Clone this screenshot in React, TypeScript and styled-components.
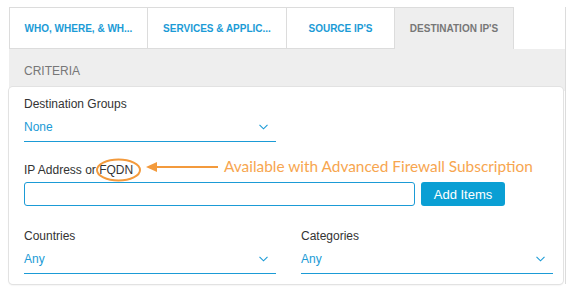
import React from "react";
import styled, { createGlobalStyle } from "styled-components";

const Global = createGlobalStyle`
  html, body { margin: 0; padding: 0; background: #fff; }
  body { font-family: "Liberation Sans", Arial, sans-serif; }
  * { box-sizing: border-box; }
`;

const Page = styled.div`
  padding: 7px 0 0 9px;
  width: 572px;
  height: 293px;
`;

const Panel = styled.div`
  width: 557px;
  border-right: 1px solid #dcdcdc;
`;

const TabBar = styled.div`
  display: flex;
  height: 42px;
`;

const Tab = styled.div<{ $active?: boolean; $w: number; $first?: boolean }>`
  width: ${(p) => p.$w}px;
  height: 42px;
  display: flex;
  align-items: center;
  justify-content: center;
  font-size: 10px;
  font-weight: bold;
  white-space: nowrap;
  color: ${(p) => (p.$active ? "#777" : "#1b9bd6")};
  background: ${(p) => (p.$active ? "#eeeeee" : "#fff")};
  border-top: 1px solid #dcdcdc;
  border-right: 1px solid #dcdcdc;
  border-left: ${(p) => (p.$first ? "1px solid #dcdcdc" : "none")};
  border-bottom: ${(p) => (p.$active ? "none" : "1px solid #dcdcdc")};
`;

const Criteria = styled.div`
  background: #eeeeee;
  height: 38px;
  padding: 15px 0 0 15px;
  font-size: 12px;
  line-height: 14px;
  color: #777;
`;

const CardWrap = styled.div`
  background: linear-gradient(#eeeeee 0 4px, transparent 4px);
  padding-right: 2px;
`;

const Card = styled.div`
  background: #fff;
  border-radius: 4px;
  box-shadow: 0 0 0 1px #e2e2e2, 0 1px 2px rgba(0, 0, 0, 0.12);
  padding: 10px 10px 10px 15px;
  display: flex;
  flex-direction: column;
`;

const Label = styled.div<{ $mt?: number }>`
  position: relative;
  font-size: 12px;
  line-height: 14px;
  color: #333;
  margin-top: ${(p) => p.$mt ?? 0}px;
  white-space: nowrap;
`;

const Select = styled.div<{ $w?: number }>`
  width: ${(p) => p.$w ?? 252}px;
  display: flex;
  align-items: center;
  justify-content: space-between;
  padding: 9px 8px 7px 0;
  border-bottom: 1px solid #1b9bd6;
  font-size: 12px;
  line-height: 14px;
  color: #1b9bd6;
`;

const Chevron = () => (
  <svg width="9" height="6" viewBox="0 0 9 6">
    <polyline points="0.5,0.8 4.5,4.8 8.5,0.8" fill="none" stroke="#1b9bd6" strokeWidth="1.1" />
  </svg>
);

const InputRow = styled.div`
  display: flex;
  gap: 6px;
  margin-top: 5px;
`;

const TextInput = styled.div`
  width: 391px;
  height: 24px;
  border: 1px solid #1b9bd6;
  border-radius: 3px;
`;

const Button = styled.div`
  width: 84px;
  height: 24px;
  border-radius: 3px;
  background: #0a9fd4;
  color: #fff;
  font-size: 13px;
  display: flex;
  align-items: center;
  justify-content: center;
`;

const Columns = styled.div`
  display: grid;
  grid-template-columns: 252px 252px;
  column-gap: 25px;
  margin-top: 23px;
`;

const Field = styled.div`
  display: flex;
  flex-direction: column;
`;

const AnnotationMarks = styled.svg`
  position: absolute;
  left: 70px;
  top: -6px;
  overflow: visible;
`;

const AnnotationText = styled.span`
  position: absolute;
  left: 200px;
  top: -7px;
  font-family: Lato, "Noto Sans", sans-serif;
  font-size: 15.4px;
  line-height: 20px;
  color: #f7a650;
  white-space: nowrap;
`;

export default function App() {
  return (
    <Page>
      <Global />
      <Panel>
        <TabBar>
          <Tab $w={139} $first>WHO, WHERE, &amp; WH...</Tab>
          <Tab $w={139}>SERVICES &amp; APPLIC...</Tab>
          <Tab $w={108}>SOURCE IP'S</Tab>
          <Tab $w={119} $active>DESTINATION IP'S</Tab>
        </TabBar>
        <Criteria>CRITERIA</Criteria>
        <CardWrap>
          <Card>
            <Label>Destination Groups</Label>
            <Select>
              <span>None</span>
              <Chevron />
            </Select>
            <Label $mt={21}>
              IP Address or FQDN
              <AnnotationMarks width="160" height="26" viewBox="0 0 160 26">
                <ellipse cx="24.5" cy="13" rx="21.5" ry="10.5" fill="none" stroke="#f39a3c" strokeWidth="2" />
                <line x1="60" y1="10" x2="124" y2="10" stroke="#f39a3c" strokeWidth="2" />
                <polygon points="52,10 63,5 63,15" fill="#f39a3c" />
              </AnnotationMarks>
              <AnnotationText>Available with Advanced Firewall Subscription</AnnotationText>
            </Label>
            <InputRow>
              <TextInput />
              <Button>Add Items</Button>
            </InputRow>
            <Columns>
              <Field>
                <Label>Countries</Label>
                <Select>
                  <span>Any</span>
                  <Chevron />
                </Select>
              </Field>
              <Field>
                <Label>Categories</Label>
                <Select>
                  <span>Any</span>
                  <Chevron />
                </Select>
              </Field>
            </Columns>
          </Card>
        </CardWrap>
      </Panel>
    </Page>
  );
}
